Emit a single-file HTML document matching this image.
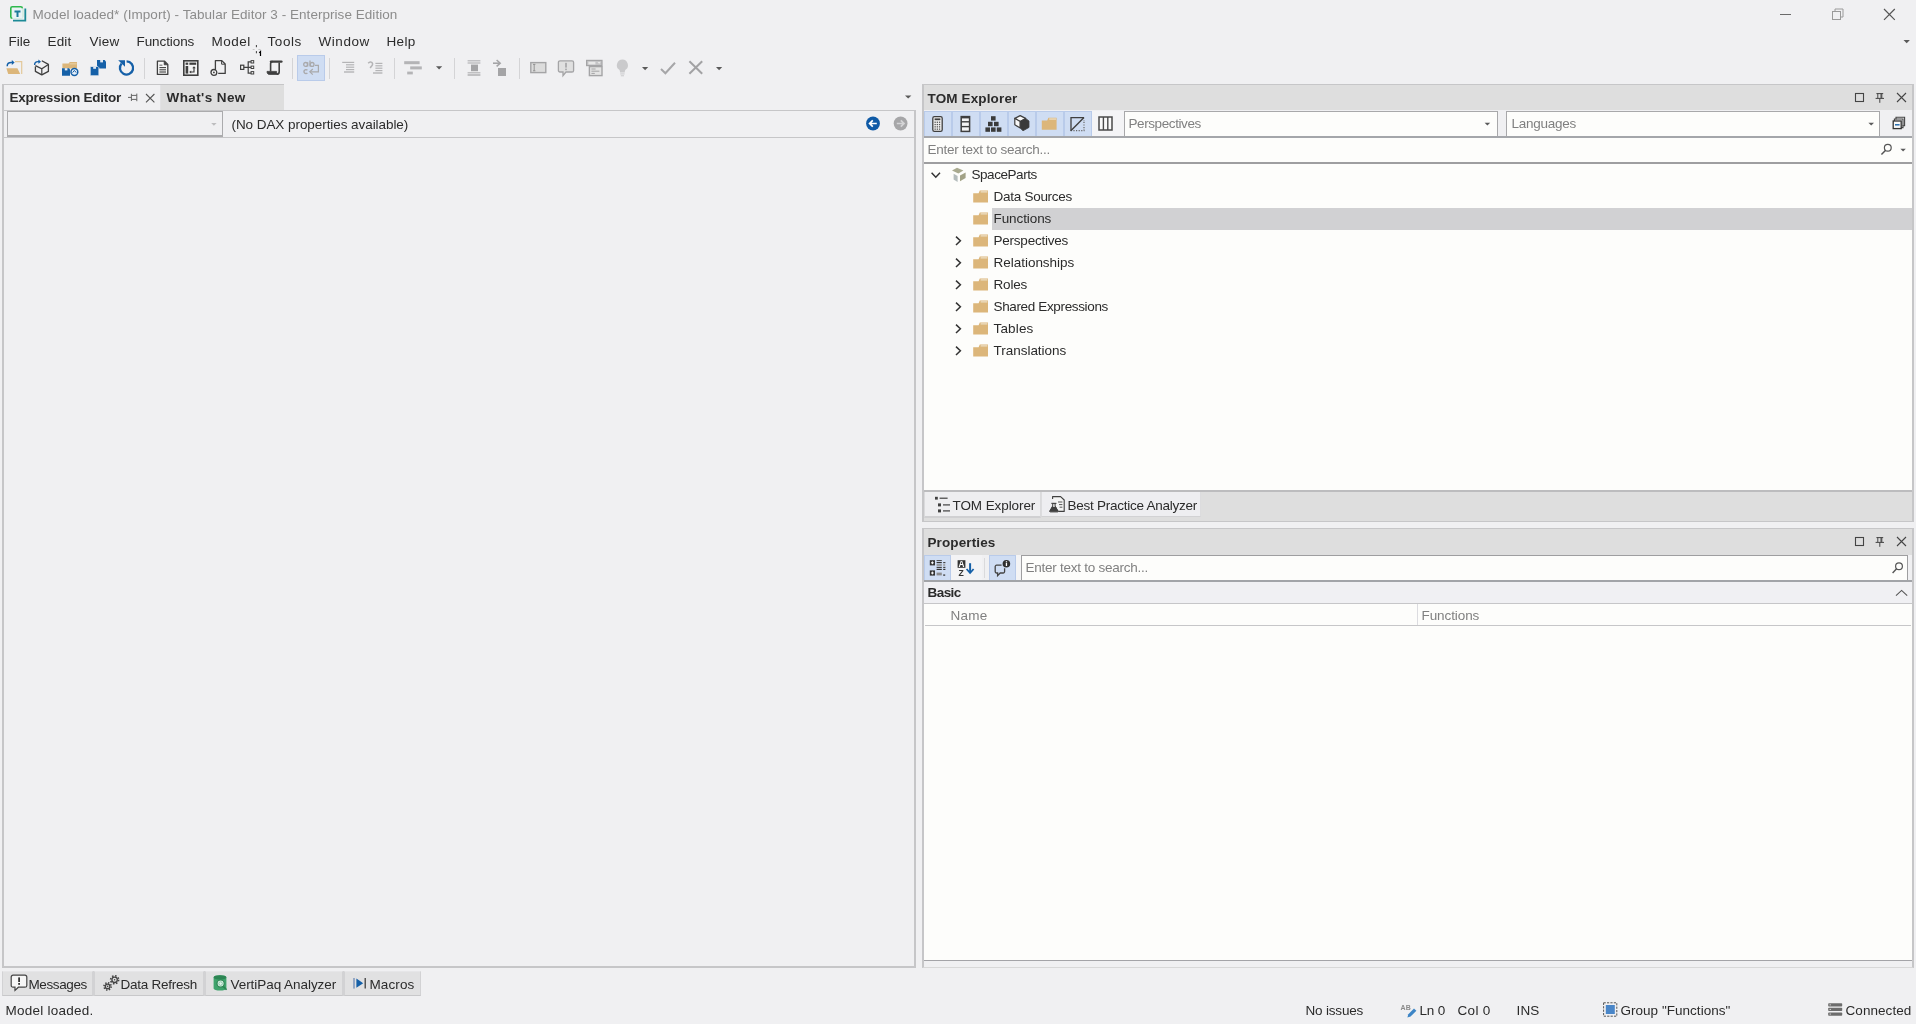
<!DOCTYPE html>
<html><head><meta charset="utf-8"><title>Tabular Editor 3</title>
<style>
html,body{margin:0;padding:0;}
body{width:1916px;height:1024px;overflow:hidden;background:#f0f0f2;position:relative;font-family:"Liberation Sans",sans-serif;font-size:13.5px;color:#2b2b2b;}
.b{position:absolute;box-sizing:border-box;}
.t{position:absolute;white-space:nowrap;line-height:20px;height:20px;}
#tx{position:absolute;left:0;top:0;width:1916px;height:1024px;will-change:transform;}
.t.bd{font-weight:bold;}
svg{position:absolute;overflow:visible;}
</style></head><body>
<div class="b" style="left:2px;top:84px;width:282px;height:26px;border-top:1px solid #c6c6c8;border-left:2px solid #c6c6c8;"></div>
<div class="b" style="left:161px;top:85px;width:123px;height:25px;background:#dedede;"></div>
<div class="b" style="left:2px;top:110px;width:914px;height:1px;background:#c6c6c8;"></div>
<div class="b" style="left:160px;top:85px;width:1px;height:25px;background:#e2e2e4;"></div>
<div class="b" style="left:2px;top:111px;width:2px;height:856px;background:#c6c6c8;"></div>
<div class="b" style="left:914px;top:110px;width:2px;height:857px;background:#c6c6c8;"></div>
<div class="b" style="left:7px;top:111px;width:216px;height:26px;border:1px solid #ababad;border-bottom:2px solid #ababad;"></div>
<div class="b" style="left:4px;top:137px;width:910px;height:1px;background:#c6c6c8;"></div>
<div class="b" style="left:2px;top:966px;width:914px;height:2px;background:#c6c6c8;"></div>
<div class="b" style="left:2px;top:971px;width:419px;height:25px;background:#d2d2d4;"></div>
<div class="b" style="left:2px;top:971px;width:91px;height:25px;background:#e1e1e2;border:1px solid #d2d2d4;border-top-color:#e6e6e8;border-bottom-color:#c8c8ca;"></div>
<div class="b" style="left:94px;top:971px;width:110px;height:25px;background:#e1e1e2;border:1px solid #d2d2d4;border-top-color:#e6e6e8;border-bottom-color:#c8c8ca;"></div>
<div class="b" style="left:205px;top:971px;width:138px;height:25px;background:#e1e1e2;border:1px solid #d2d2d4;border-top-color:#e6e6e8;border-bottom-color:#c8c8ca;"></div>
<div class="b" style="left:344px;top:971px;width:77px;height:25px;background:#e1e1e2;border:1px solid #d2d2d4;border-top-color:#e6e6e8;border-bottom-color:#c8c8ca;"></div>
<div class="b" style="left:922px;top:84px;width:992px;height:438px;background:#dedede;border:1px solid #c6c6c8;border-right:2px solid #c6c6c8;border-left:2px solid #c6c6c8;"></div>
<div class="b" style="left:924px;top:110px;width:988px;height:28px;background:#f0f0f2;"></div>
<div class="b" style="left:924px;top:111px;width:28px;height:25px;background:#cfddf3;border:1px solid #b9cbea;border-bottom:none;"></div>
<div class="b" style="left:952px;top:111px;width:28px;height:25px;background:#cfddf3;border:1px solid #b9cbea;border-bottom:none;"></div>
<div class="b" style="left:980px;top:111px;width:28px;height:25px;background:#cfddf3;border:1px solid #b9cbea;border-bottom:none;"></div>
<div class="b" style="left:1008px;top:111px;width:28px;height:25px;background:#cfddf3;border:1px solid #b9cbea;border-bottom:none;"></div>
<div class="b" style="left:1036px;top:111px;width:28px;height:25px;background:#cfddf3;border:1px solid #b9cbea;border-bottom:none;"></div>
<div class="b" style="left:1064px;top:111px;width:28px;height:25px;background:#cfddf3;border:1px solid #b9cbea;border-bottom:none;"></div>
<div class="b" style="left:1092px;top:111px;width:32px;height:25px;background:#f4f4f6;"></div>
<div class="b" style="left:1124px;top:111px;width:374px;height:25px;background:#fdfdfb;border:1px solid #a8a8aa;border-bottom:none;"></div>
<div class="b" style="left:1506px;top:111px;width:374px;height:25px;background:#fdfdfb;border:1px solid #a8a8aa;border-bottom:none;"></div>
<div class="b" style="left:924px;top:136px;width:988px;height:2px;background:#a4a6aa;"></div>
<div class="b" style="left:924px;top:138px;width:988px;height:26px;background:#fdfdfb;border-bottom:2px solid #9e9ea0;"></div>
<div class="b" style="left:924px;top:164px;width:988px;height:326px;background:#fdfdfb;"></div>
<div class="b" style="left:992px;top:208px;width:920px;height:22px;background:#d1d1d3;"></div>
<div class="b" style="left:924px;top:490px;width:988px;height:2px;background:#bcbcbe;"></div>
<div class="b" style="left:924px;top:492px;width:117px;height:26px;background:#eeeef0;border:1px solid #dadadc;border-top:none;border-bottom:2px solid #d0d0d2;"></div>
<div class="b" style="left:1041px;top:492px;width:160px;height:25px;background:#eeeef1;border:1px solid #dcdcde;border-top:none;border-bottom-color:#d2d2d4;"></div>
<div class="b" style="left:922px;top:528px;width:992px;height:440px;background:#dedede;border:1px solid #c6c6c8;border-right:2px solid #c6c6c8;border-left:2px solid #c6c6c8;border-bottom-color:#d8d8d8;"></div>
<div class="b" style="left:924px;top:555px;width:988px;height:412px;background:#f0f0f2;"></div>
<div class="b" style="left:924px;top:555px;width:27px;height:25px;background:#cfddf3;border:1px solid #b9cbea;border-bottom:none;"></div>
<div class="b" style="left:989px;top:555px;width:27px;height:25px;background:#cfddf3;border:1px solid #b9cbea;border-bottom:none;"></div>
<div class="b" style="left:951px;top:555px;width:31px;height:25px;background:#f3f3f5;"></div>
<div class="b" style="left:983.5px;top:558px;width:1px;height:20px;background:#dadadc;"></div>
<div class="b" style="left:1021px;top:555px;width:887px;height:25px;background:#fdfdfb;border:1px solid #9e9ea0;border-bottom:none;"></div>
<div class="b" style="left:1016px;top:555px;width:5px;height:25px;background:#f4f4f5;"></div>
<div class="b" style="left:924px;top:580px;width:988px;height:2px;background:#a2a4a8;"></div>
<div class="b" style="left:924px;top:582px;width:988px;height:22px;background:#f0f0f3;border-bottom:1px solid #c6c6c8;"></div>
<div class="b" style="left:924px;top:604px;width:988px;height:357px;background:#fdfdfb;border-bottom:1px solid #a4a4a8;"></div>
<div class="b" style="left:925px;top:625px;width:986px;height:1px;background:#c6c6c8;"></div>
<div class="b" style="left:1417px;top:604px;width:1px;height:21px;background:#dcdce0;"></div>
<div class="b" style="left:144px;top:58px;width:1px;height:21px;background:#d4d4d6;"></div>
<div class="b" style="left:292px;top:58px;width:1px;height:21px;background:#d4d4d6;"></div>
<div class="b" style="left:329px;top:58px;width:1px;height:21px;background:#d4d4d6;"></div>
<div class="b" style="left:394px;top:58px;width:1px;height:21px;background:#d4d4d6;"></div>
<div class="b" style="left:454px;top:58px;width:1px;height:21px;background:#d4d4d6;"></div>
<div class="b" style="left:519px;top:58px;width:1px;height:21px;background:#d4d4d6;"></div>
<div class="b" style="left:297px;top:55px;width:28px;height:26px;background:#cfddf3;border:1px solid #b9cbea;"></div>
<div id="tx">
<span class="t" id="t0" style="left:32.50px;top:5px;color:#8c8c8c;letter-spacing:0.043px;">Model loaded* (Import) - Tabular Editor 3 - Enterprise Edition</span>
<span class="t" id="t1" style="left:8.50px;top:32px;letter-spacing:0.011px;">File</span>
<span class="t" id="t2" style="left:47.50px;top:32px;letter-spacing:0.178px;">Edit</span>
<span class="t" id="t3" style="left:89.50px;top:32px;letter-spacing:0.256px;">View</span>
<span class="t" id="t4" style="left:136.50px;top:32px;letter-spacing:-0.091px;">Functions</span>
<span class="t" id="t5" style="left:211.50px;top:32px;letter-spacing:0.505px;">Model</span>
<span class="t" id="t6" style="left:267.50px;top:32px;letter-spacing:0.571px;">Tools</span>
<span class="t" id="t7" style="left:318.50px;top:32px;letter-spacing:0.557px;">Window</span>
<span class="t" id="t8" style="left:386.50px;top:32px;letter-spacing:0.345px;">Help</span>
<span class="t bd" id="t9" style="left:9.50px;top:88px;letter-spacing:-0.233px;">Expression Editor</span>
<span class="t bd" id="t10" style="left:166.50px;top:88px;letter-spacing:0.396px;">What's New</span>
<span class="t" id="t11" style="left:231.50px;top:115px;letter-spacing:-0.064px;">(No DAX properties available)</span>
<span class="t bd" id="t12" style="left:927.50px;top:89px;letter-spacing:0.138px;">TOM Explorer</span>
<span class="t" id="t13" style="left:1128.50px;top:114px;color:#808080;letter-spacing:-0.409px;">Perspectives</span>
<span class="t" id="t14" style="left:1511.50px;top:114px;color:#808080;letter-spacing:-0.254px;">Languages</span>
<span class="t" id="t15" style="left:927.50px;top:140px;color:#808080;letter-spacing:-0.251px;">Enter text to search...</span>
<span class="t" id="t16" style="left:971.50px;top:165px;letter-spacing:-0.444px;">SpaceParts</span>
<span class="t" id="t17" style="left:993.50px;top:187px;letter-spacing:-0.272px;">Data Sources</span>
<span class="t" id="t18" style="left:993.50px;top:209px;letter-spacing:-0.091px;">Functions</span>
<span class="t" id="t19" style="left:993.50px;top:231px;letter-spacing:-0.227px;">Perspectives</span>
<span class="t" id="t20" style="left:993.50px;top:253px;letter-spacing:-0.021px;">Relationships</span>
<span class="t" id="t21" style="left:993.50px;top:275px;letter-spacing:-0.179px;">Roles</span>
<span class="t" id="t22" style="left:993.50px;top:297px;letter-spacing:-0.355px;">Shared Expressions</span>
<span class="t" id="t23" style="left:993.50px;top:319px;letter-spacing:0.154px;">Tables</span>
<span class="t" id="t24" style="left:993.50px;top:341px;letter-spacing:-0.021px;">Translations</span>
<span class="t" id="t25" style="left:952.50px;top:496px;letter-spacing:-0.089px;">TOM Explorer</span>
<span class="t" id="t26" style="left:1067.50px;top:496px;letter-spacing:-0.251px;">Best Practice Analyzer</span>
<span class="t bd" id="t27" style="left:927.50px;top:533px;letter-spacing:0.113px;">Properties</span>
<span class="t" id="t28" style="left:1025.50px;top:558px;color:#808080;letter-spacing:-0.251px;">Enter text to search...</span>
<span class="t bd" id="t29" style="left:927.50px;top:583px;letter-spacing:-0.558px;">Basic</span>
<span class="t" id="t30" style="left:950.50px;top:606px;color:#808080;letter-spacing:0.261px;">Name</span>
<span class="t" id="t31" style="left:1421.50px;top:606px;color:#808080;letter-spacing:-0.091px;">Functions</span>
<span class="t" id="t32" style="left:28.50px;top:975px;letter-spacing:-0.390px;">Messages</span>
<span class="t" id="t33" style="left:120.50px;top:975px;letter-spacing:-0.250px;">Data Refresh</span>
<span class="t" id="t34" style="left:230.50px;top:975px;letter-spacing:-0.049px;">VertiPaq Analyzer</span>
<span class="t" id="t35" style="left:369.50px;top:975px;letter-spacing:0.107px;">Macros</span>
<span class="t" id="t36" style="left:5.50px;top:1001px;letter-spacing:0.249px;">Model loaded.</span>
<span class="t" id="t37" style="left:1305.50px;top:1001px;letter-spacing:-0.185px;">No issues</span>
<span class="t" id="t38" style="left:1419.50px;top:1001px;letter-spacing:-0.160px;">Ln 0</span>
<span class="t" id="t39" style="left:1457.50px;top:1001px;letter-spacing:0.321px;">Col 0</span>
<span class="t" id="t40" style="left:1516.50px;top:1001px;letter-spacing:0.142px;">INS</span>
<span class="t" id="t41" style="left:1620.50px;top:1001px;letter-spacing:0.026px;">Group &quot;Functions&quot;</span>
<span class="t" id="t42" style="left:1845.50px;top:1001px;letter-spacing:0.061px;">Connected</span>
</div>
<svg style="left:0;top:0" width="1916" height="1024" viewBox="0 0 1916 1024">
<rect x="10.8" y="6.8" width="11.5" height="11.5" fill="none" stroke="#2db84d" stroke-width="1.6" rx="1.5"/>
<path d="M13 20.6h12.3v-12" fill="none" stroke="#1c8a96" stroke-width="1.8" />
<rect x="12.3" y="8.3" width="10.6" height="10.6" fill="#e9f3f6" />
<path d="M14.5 10.5h6v2h-2v4.5h-2v-4.5h-2z" fill="#1c7a9a" stroke="none" stroke-width="1" />
<line x1="1780" y1="14.5" x2="1791" y2="14.5" stroke="#6a6a6a" stroke-width="1" />
<rect x="1832.5" y="11.5" width="8" height="8" fill="none" stroke="#9a9a9a" stroke-width="1" rx="0"/>
<path d="M1835 11.5v-2.5h8v8h-2.5" fill="none" stroke="#9a9a9a" stroke-width="1" />
<path d="M1884 9l10.8 10.8M1894.8 9l-10.8 10.8" fill="none" stroke="#555" stroke-width="1.2" />
<path d="M1903.5 40h6.4l-3.2 3.2z" fill="#5a5a5a" stroke="none" stroke-width="1" />
<g transform="translate(6 60)">
<path d="M9 1.7h6.7v12.3" fill="none" stroke="#e3c89a" stroke-width="1.2" />
<path d="M0.4 8.3h11l2.8 5.7h-12z" fill="#dcb67a" stroke="none" stroke-width="1" />
<path d="M1.2 6.2c0-2.6 1.6-3.6 4-3.6h1.6" fill="none" stroke="#1560a8" stroke-width="1.5" />
<path d="M5.8 0l2.8 2.5l-2.8 2.5z" fill="#1560a8" stroke="none" stroke-width="1" />
</g>
<g transform="translate(34 60)">
<path d="M7.8 0.8l6.6 3.6v7l-6.6 3.5l-6.4-3.5v-5" fill="none" stroke="#3f3f3f" stroke-width="1.3" stroke-linejoin="round"/>
<path d="M1.4 5.6l6.4 3.2l6.6-4.4M7.8 8.8v6" fill="none" stroke="#3f3f3f" stroke-width="1.2" />
<path d="M0.6 5c0-2.4 1.4-3.4 3.4-3.4h1.2" fill="none" stroke="#1560a8" stroke-width="1.4" />
<path d="M4.4 -0.4l2.6 2.1l-2.6 2.1z" fill="#1560a8" stroke="none" stroke-width="1" />
</g>
<g transform="translate(62 60)">
<path d="M0.4 3.6h6.2l1.2-1.6h7.2v6.4h-14.6z" fill="#dcb67a" stroke="none" stroke-width="1" />
<rect x="7.6" y="3.4" width="7" height="0.9" fill="#ecd6ae" />
<path d="M0 8.2h7l1 1v6.6h-8z" fill="#1560a8" stroke="none" stroke-width="1" />
<rect x="2.8" y="8.2" width="2.6" height="2.2" fill="#e8eef6" />
<circle cx="12.4" cy="12" r="3.4" fill="#e6eef8" stroke="#1560a8" stroke-width="1.5"/>
<path d="M10.6 12.6l1.8-2.2l1.8 2.2" fill="none" stroke="#1560a8" stroke-width="1" />
</g>
<g transform="translate(90 60)">
<path d="M7 0h7.6l1.4 1.4v7.2h-9z" fill="#1560a8" stroke="none" stroke-width="1" />
<rect x="10.2" y="0" width="2.8" height="2.4" fill="#dfe8f3" />
<path d="M0.2 6.4h7.4l1.3 1.3v8.1h-8.7z" fill="#1560a8" stroke="#f0f0f2" stroke-width="0.8" />
<rect x="3.2" y="6.6" width="2.8" height="2.2" fill="#dfe8f3" />
</g>
<g transform="translate(118 60)">
<path d="M3.6 3.6A6.6 6.6 0 1 0 8.6 1.4" fill="none" stroke="#1560a8" stroke-width="2.3" />
<path d="M0.2 0.2h6.8v6.6z" fill="#1560a8" stroke="none" stroke-width="1" />
</g>
<g transform="translate(154 60)">
<path d="M3.4 1.2h7.2l3.2 3.2v10h-10.4z" fill="#f7f7f7" stroke="#3f3f3f" stroke-width="1.3" stroke-linejoin="round"/>
<path d="M10.2 1.2v3.6h3.6" fill="#3f3f3f" stroke="#3f3f3f" stroke-width="0.8" />
<line x1="5.4" y1="5.2" x2="8.4" y2="5.2" stroke="#777" stroke-width="1.2" />
<line x1="5.4" y1="7.6" x2="12" y2="7.6" stroke="#3f3f3f" stroke-width="1.1" />
<line x1="5.4" y1="9.8" x2="12" y2="9.8" stroke="#3f3f3f" stroke-width="1.1" />
<line x1="5.4" y1="12" x2="12" y2="12" stroke="#3f3f3f" stroke-width="1.1" />
</g>
<g transform="translate(182 60)">
<rect x="1.8" y="0.8" width="14" height="14.4" fill="#f4f4f4" stroke="#3f3f3f" stroke-width="1.6" rx="0"/>
<rect x="3.6" y="2.6" width="2.6" height="2.2" fill="#3f3f3f" />
<rect x="7.4" y="2.6" width="6.8" height="2.2" fill="#3f3f3f" />
<rect x="3.6" y="6" width="2.6" height="7.6" fill="#3f3f3f" />
<path d="M8.4 12h3.6v-4.6" fill="none" stroke="#3f3f3f" stroke-width="1.2" />
<path d="M10.2 8.2l1.8-2l1.8 2z" fill="#3f3f3f" stroke="none" stroke-width="1" />
<path d="M9.2 10.4l-2 1.6l2 1.6z" fill="#3f3f3f" stroke="none" stroke-width="1" />
</g>
<g transform="translate(210 60)">
<path d="M5.4 10.6v-10h6.4l3.4 3.4v9.4h-7" fill="none" stroke="#3f3f3f" stroke-width="1.3" stroke-linejoin="round"/>
<path d="M11.6 0.8v3.4h3.4" fill="none" stroke="#3f3f3f" stroke-width="1" />
<circle cx="3.9" cy="12.4" r="2.9" fill="#f4f4f4" stroke="#3f3f3f" stroke-width="1.3"/>
<circle cx="3.9" cy="12.4" r="0.9" fill="#3f3f3f" stroke="none" stroke-width="1"/>
</g>
<g transform="translate(238 60)">
<rect x="2.6" y="5.2" width="3.2" height="4.2" fill="#f8f8f8" stroke="#3f3f3f" stroke-width="1.2" rx="0"/>
<path d="M5.8 7.3h4.4M13.2 1.8h-3v11.4h3M10.2 7.3h3" fill="none" stroke="#3f3f3f" stroke-width="1.2" />
<rect x="13.1" y="0.6" width="2.6" height="2.4" fill="#f8f8f8" stroke="#3f3f3f" stroke-width="1" rx="0"/>
<rect x="13.1" y="6.1" width="2.6" height="2.4" fill="#f8f8f8" stroke="#3f3f3f" stroke-width="1" rx="0"/>
<rect x="13.1" y="11.6" width="2.6" height="2.4" fill="#f8f8f8" stroke="#3f3f3f" stroke-width="1" rx="0"/>
</g>
<g transform="translate(266 60)">
<path d="M5 1.6h10.4" fill="none" stroke="#3f3f3f" stroke-width="2.4" stroke-linecap="round"/>
<path d="M4.6 11.4v-7.6c0-1.4 0.8-2.2 2-2.2M13.2 2.6v9.2c0 1.6-1 2.4-2.4 2.4" fill="none" stroke="#3f3f3f" stroke-width="1.6" />
<path d="M1 11.4h9.6c0 1.6 0.6 2.8 1.6 3h-9c-1.4 0-2.2-1.2-2.2-3z" fill="#3f3f3f" stroke="#3f3f3f" stroke-width="0.8" />
</g>
<g transform="translate(303 60)">
<circle cx="2.6" cy="4.4" r="1.9" fill="none" stroke="#a9a9ab" stroke-width="1.3"/>
<line x1="4.7" y1="2.2" x2="4.7" y2="6.6" stroke="#a9a9ab" stroke-width="1.3" />
<line x1="7" y1="0.6" x2="7" y2="6.6" stroke="#a9a9ab" stroke-width="1.3" />
<circle cx="9.1" cy="4.4" r="1.9" fill="none" stroke="#a9a9ab" stroke-width="1.3"/>
<path d="M4.4 10.2a2 2 0 1 0 0 2.8" fill="none" stroke="#a9a9ab" stroke-width="1.4" />
<path d="M12 5.4h3.4v6.4h-8.2" fill="none" stroke="#a9a9ab" stroke-width="1.2" />
<path d="M9.8 9l-3 2.8l3 2.8" fill="none" stroke="#a9a9ab" stroke-width="1.2" />
</g>
<g transform="translate(340 60)">
<line x1="2.2" y1="2.4" x2="14.2" y2="2.4" stroke="#b4b4b6" stroke-width="1.2" />
<line x1="6" y1="4.8" x2="14.2" y2="4.8" stroke="#b4b4b6" stroke-width="1.2" />
<line x1="6" y1="7.2" x2="14.2" y2="7.2" stroke="#b4b4b6" stroke-width="1.2" />
<line x1="6" y1="9.6" x2="14.2" y2="9.6" stroke="#b4b4b6" stroke-width="1.2" />
<line x1="4" y1="12" x2="14.2" y2="12" stroke="#b4b4b6" stroke-width="1.4" />
</g>
<g transform="translate(367 60)">
<path d="M1.2 3.2c1.4-1.8 4-1.6 4.4 0.6c0.2 1.6-1.4 2.6-2.4 4.2" fill="none" stroke="#b4b4b6" stroke-width="1.6" />
<line x1="8.4" y1="3.4" x2="15.4" y2="3.4" stroke="#b4b4b6" stroke-width="1.2" />
<line x1="8.4" y1="5.8" x2="15.4" y2="5.8" stroke="#b4b4b6" stroke-width="1.2" />
<line x1="8.4" y1="8.2" x2="15.4" y2="8.2" stroke="#b4b4b6" stroke-width="1.2" />
<line x1="8.4" y1="10.6" x2="15.4" y2="10.6" stroke="#b4b4b6" stroke-width="1.2" />
<line x1="6" y1="13" x2="15.4" y2="13" stroke="#b4b4b6" stroke-width="1.4" />
</g>
<rect x="404.2" y="61.2" width="15.4" height="3" fill="#b4b4b6" />
<rect x="410.2" y="66.4" width="11.6" height="3" fill="#b4b4b6" />
<rect x="407.2" y="71.6" width="5.6" height="2.8" fill="#b4b4b6" />
<path d="M436 66.2h6.2l-3.1 3.2z" fill="#5a5a5a" stroke="none" stroke-width="1" />
<g transform="translate(465 60)">
<line x1="2.6" y1="0.8" x2="15.4" y2="0.8" stroke="#b4b4b6" stroke-width="1.2" />
<line x1="2.6" y1="3" x2="15.4" y2="3" stroke="#b4b4b6" stroke-width="1.2" />
<rect x="6" y="4.6" width="7" height="6.6" fill="#a4a4a6" />
<line x1="2.6" y1="12.8" x2="15.4" y2="12.8" stroke="#b4b4b6" stroke-width="1.2" />
<line x1="2.6" y1="15" x2="15.4" y2="15" stroke="#b4b4b6" stroke-width="1.6" />
</g>
<g transform="translate(492 60)">
<path d="M1 3.2h6" fill="none" stroke="#a4a4a6" stroke-width="1.6" />
<path d="M4.6 0l3.6 3.2l-3.6 3.2" fill="none" stroke="#a4a4a6" stroke-width="1.5" />
<rect x="6" y="8" width="8" height="8" fill="#a4a4a6" />
</g>
<rect x="530.8" y="62.6" width="15" height="10" fill="#dcdcdc" stroke="#a4a4a6" stroke-width="1.4" rx="0"/>
<path d="M533 64.4h2.4M533 70.8h2.4M534.2 64.4v6.4" fill="none" stroke="#8c8c8c" stroke-width="0.9" />
<g transform="translate(558 60)">
<path d="M2 0.8h12a1.6 1.6 0 0 1 1.6 1.6v8a1.6 1.6 0 0 1-1.6 1.6h-6l-3 3.6v-3.6h-3a1.6 1.6 0 0 1-1.6-1.6v-8a1.6 1.6 0 0 1 1.6-1.6z" fill="#e0e0e0" stroke="#a4a4a6" stroke-width="1.3" />
<rect x="7.2" y="2.8" width="1.6" height="4.8" fill="#a4a4a6" />
<rect x="7.2" y="8.6" width="1.6" height="1.6" fill="#a4a4a6" />
</g>
<g transform="translate(586 60)">
<rect x="0.6" y="0.4" width="15.4" height="5.2" fill="#c4c4c6" stroke="#a4a4a6" stroke-width="1.2" rx="0"/>
<rect x="2.4" y="1.8" width="7" height="2.6" fill="#e8e8e8" />
<path d="M11.6 2l3 0l-1.5 2z" fill="#e8e8e8" stroke="none" stroke-width="1" />
<rect x="3.4" y="6.6" width="12.6" height="9" fill="#e4e4e4" stroke="#a4a4a6" stroke-width="1.4" rx="0"/>
<line x1="5.4" y1="9" x2="9.6" y2="9" stroke="#a4a4a6" stroke-width="1" />
<line x1="5.4" y1="11.2" x2="13.4" y2="11.2" stroke="#a4a4a6" stroke-width="1" />
<line x1="5.4" y1="13.4" x2="8.8" y2="13.4" stroke="#a4a4a6" stroke-width="1" />
</g>
<g transform="translate(614 60)">
<path d="M8.4 -0.4a5.6 5.6 0 0 1 3.4 10c-0.8 0.8-1 1.6-1 3h-4.8c0-1.4-0.2-2.2-1-3a5.6 5.6 0 0 1 3.4-10z" fill="#cacacc" stroke="none" stroke-width="1" />
<rect x="6.2" y="13.2" width="4.4" height="1.4" fill="#d4d4d6" />
<rect x="6.8" y="15" width="3.2" height="1.4" fill="#d4d4d6" />
</g>
<path d="M642 67h6.2l-3.1 3.2z" fill="#5a5a5a" stroke="none" stroke-width="1" />
<path d="M661 69l4.4 4.2l9.6-10.4" fill="none" stroke="#a6a6a8" stroke-width="2" />
<path d="M689.4 61.2l12.8 12.6M702.2 61.2l-12.8 12.6" fill="none" stroke="#a2a2a4" stroke-width="2" />
<path d="M716 67h6.2l-3.1 3.2z" fill="#5a5a5a" stroke="none" stroke-width="1" />
<path d="M128 97.4h3.4M131.4 93.8v7.2M131.4 95.4h5.4M131.4 99.4h5.4M136.8 93.6v7.6" fill="none" stroke="#666" stroke-width="1" />
<path d="M146 94l8.4 8.4M154.4 94l-8.4 8.4" fill="none" stroke="#555" stroke-width="1.1" />
<path d="M905 95.4h6.4l-3.2 3.2z" fill="#5a5a5a" stroke="none" stroke-width="1" />
<path d="M211.2 123h5.4l-2.7 2.7z" fill="#bdbdbf" stroke="none" stroke-width="1" />
<circle cx="873" cy="123.5" r="6.9" fill="#0f5aa6" stroke="none" stroke-width="1"/>
<path d="M876.8 123.5h-6.6M872.8 120.4l-3.2 3.1l3.2 3.1" fill="none" stroke="#fff" stroke-width="1.7" />
<circle cx="900.6" cy="123.5" r="6.9" fill="#a6a6a8" stroke="none" stroke-width="1"/>
<path d="M896.8 123.5h6.6M900.8 120.4l3.2 3.1l-3.2 3.1" fill="none" stroke="#d4d4d6" stroke-width="1.7" />
<rect x="1855.5" y="93.5" width="8" height="8" fill="none" stroke="#444" stroke-width="1.1" rx="0"/>
<path d="M1876.4 93.6h6.8M1877.8 93.6v4.6M1881.8 93.6v4.6M1881 93.6v4.6M1875.6 98.4h8.4M1879.8 98.4v4.4" fill="none" stroke="#444" stroke-width="1" />
<path d="M1897 93l9 9M1906 93l-9 9" fill="none" stroke="#444" stroke-width="1.1" />
<rect x="1855.5" y="537.5" width="8" height="8" fill="none" stroke="#444" stroke-width="1.1" rx="0"/>
<path d="M1876.4 537.6h6.8M1877.8 537.6v4.6M1881.8 537.6v4.6M1881 537.6v4.6M1875.6 542.4h8.4M1879.8 542.4v4.4" fill="none" stroke="#444" stroke-width="1" />
<path d="M1897 537l9 9M1906 537l-9 9" fill="none" stroke="#444" stroke-width="1.1" />
<rect x="932.8" y="116.6" width="9.4" height="14.8" fill="#f2f2f2" stroke="#3f3f3f" stroke-width="1.3" rx="1.6"/>
<rect x="934.6" y="118.4" width="5.8" height="1.8" fill="#3f3f3f" />
<rect x="934.5" y="121.6" width="1.3" height="1.3" fill="#555" />
<rect x="936.7" y="121.6" width="1.3" height="1.3" fill="#555" />
<rect x="938.9" y="121.6" width="1.3" height="1.3" fill="#555" />
<rect x="934.5" y="123.89999999999999" width="1.3" height="1.3" fill="#555" />
<rect x="936.7" y="123.89999999999999" width="1.3" height="1.3" fill="#555" />
<rect x="938.9" y="123.89999999999999" width="1.3" height="1.3" fill="#555" />
<rect x="934.5" y="126.19999999999999" width="1.3" height="1.3" fill="#555" />
<rect x="936.7" y="126.19999999999999" width="1.3" height="1.3" fill="#555" />
<rect x="938.9" y="126.19999999999999" width="1.3" height="1.3" fill="#555" />
<rect x="934.5" y="128.5" width="1.3" height="1.3" fill="#555" />
<rect x="936.7" y="128.5" width="1.3" height="1.3" fill="#555" />
<rect x="938.9" y="128.5" width="1.3" height="1.3" fill="#555" />
<rect x="961.2" y="116.6" width="8.4" height="14.8" fill="#f4f4f4" stroke="#3f3f3f" stroke-width="1.5" rx="0"/>
<rect x="961" y="116.2" width="8.8" height="2.2" fill="#3f3f3f" />
<line x1="961" y1="121.8" x2="969.8" y2="121.8" stroke="#3f3f3f" stroke-width="1.4" />
<line x1="961" y1="126.6" x2="969.8" y2="126.6" stroke="#3f3f3f" stroke-width="1.4" />
<rect x="991" y="116.2" width="4.6" height="4.4" fill="#3a3a3a" />
<rect x="988" y="121.8" width="4.6" height="4.4" fill="#3a3a3a" />
<rect x="994" y="121.8" width="4.6" height="4.4" fill="#3a3a3a" />
<rect x="985.4" y="127.4" width="4.6" height="4.4" fill="#3a3a3a" />
<rect x="991" y="127.4" width="4.6" height="4.4" fill="#3a3a3a" />
<rect x="996.8" y="127.4" width="4.6" height="4.4" fill="#3a3a3a" />
<g transform="translate(1014 115)">
<path d="M6.2 0.6l5.4 2.8l-5.4 3l-5.4-3z" fill="#f8f8f8" stroke="#3f3f3f" stroke-width="1.2" stroke-linejoin="round"/>
<path d="M0.8 3.4v6.4l5.4 3.2v-6.6z" fill="#f8f8f8" stroke="#3f3f3f" stroke-width="1.2" stroke-linejoin="round"/>
<path d="M6.2 6.4l5.4-3l3.4 2.6v6.4l-6 3.4l-2.8-2.8z" fill="#3a3a3a" stroke="#3f3f3f" stroke-width="0.8" stroke-linejoin="round"/>
</g>
<path d="M1041.8 120.39999999999999h5.4l1.2-2.6h8.2v12h-14.8z" fill="#dcb67a" stroke="none" stroke-width="1" />
<rect x="1049.2" y="118.3" width="6.8" height="1.5" fill="#ead9ba" />
<path d="M1071 130.6v-13h13" fill="none" stroke="#3f3f3f" stroke-width="1.3" />
<line x1="1070.6" y1="131" x2="1084" y2="117.6" stroke="#3f3f3f" stroke-width="1.4" />
<path d="M1073.4 130.6h10.6v-10.6" fill="none" stroke="#666" stroke-width="1.2" stroke-dasharray="1.2 1.4"/>
<rect x="1099" y="117" width="13" height="13" fill="#fafafa" stroke="#4a4a4a" stroke-width="1.5" rx="0"/>
<line x1="1103.4" y1="117" x2="1103.4" y2="130" stroke="#4a4a4a" stroke-width="1.4" />
<line x1="1107.8" y1="117" x2="1107.8" y2="130" stroke="#4a4a4a" stroke-width="1.4" />
<path d="M1484.6 122.8h5.6l-2.8 2.8z" fill="#5a5a5a" stroke="none" stroke-width="1" />
<path d="M1868.4 122.8h5.6l-2.8 2.8z" fill="#5a5a5a" stroke="none" stroke-width="1" />
<path d="M1896 119.4v-2.2h8.6v8.6h-2.2" fill="none" stroke="#444" stroke-width="1.1" />
<path d="M1894.4 121v-2h8.6v8.6h-2" fill="none" stroke="#444" stroke-width="1.1" />
<rect x="1893.2" y="121" width="8" height="7.6" fill="#f8f8f8" stroke="#333" stroke-width="1.3" rx="0"/>
<line x1="1895" y1="124.8" x2="1899.6" y2="124.8" stroke="#1560a8" stroke-width="1.4" />
<circle cx="1887.8000000000002" cy="147.79999999999998" r="3.4" fill="none" stroke="#555" stroke-width="1.2"/>
<line x1="1885.4" y1="150.4" x2="1881.4" y2="154.6" stroke="#555" stroke-width="1.4" />
<path d="M1900.4 148.8h5.4l-2.7 2.7z" fill="#5a5a5a" stroke="none" stroke-width="1" />
<circle cx="1899.0" cy="566.2" r="3.4" fill="none" stroke="#555" stroke-width="1.2"/>
<line x1="1896.6" y1="568.8" x2="1892.6" y2="573" stroke="#555" stroke-width="1.4" />
<path d="M931.6 172.8l4.2 4.4l4.2-4.4" fill="none" stroke="#333" stroke-width="1.5" />
<g transform="translate(951 167)">
<path d="M1 3.4l5-2.6l6.4 2.8l-5 2.8z" fill="#a9aa8f" stroke="none" stroke-width="1" />
<path d="M2.6 6.8l4 2.2v6l-4-2.4z" fill="#b4bcbc" stroke="none" stroke-width="1" />
<path d="M9 8.4l5.6-3v5.6l-5.6 3.2z" fill="#a2a286" stroke="none" stroke-width="1" />
</g>
<path d="M973.2 193.20000000000002h5.4l1.2-2.6h8.2v12h-14.8z" fill="#dcb67a" stroke="none" stroke-width="1" />
<rect x="980.6" y="191.1" width="6.8" height="1.5" fill="#ead9ba" />
<path d="M973.2 215.20000000000002h5.4l1.2-2.6h8.2v12h-14.8z" fill="#dcb67a" stroke="none" stroke-width="1" />
<rect x="980.6" y="213.1" width="6.8" height="1.5" fill="#ead9ba" />
<path d="M973.2 237.20000000000002h5.4l1.2-2.6h8.2v12h-14.8z" fill="#dcb67a" stroke="none" stroke-width="1" />
<rect x="980.6" y="235.1" width="6.8" height="1.5" fill="#ead9ba" />
<path d="M973.2 259.2h5.4l1.2-2.6h8.2v12h-14.8z" fill="#dcb67a" stroke="none" stroke-width="1" />
<rect x="980.6" y="257.09999999999997" width="6.8" height="1.5" fill="#ead9ba" />
<path d="M973.2 281.2h5.4l1.2-2.6h8.2v12h-14.8z" fill="#dcb67a" stroke="none" stroke-width="1" />
<rect x="980.6" y="279.09999999999997" width="6.8" height="1.5" fill="#ead9ba" />
<path d="M973.2 303.2h5.4l1.2-2.6h8.2v12h-14.8z" fill="#dcb67a" stroke="none" stroke-width="1" />
<rect x="980.6" y="301.09999999999997" width="6.8" height="1.5" fill="#ead9ba" />
<path d="M973.2 325.2h5.4l1.2-2.6h8.2v12h-14.8z" fill="#dcb67a" stroke="none" stroke-width="1" />
<rect x="980.6" y="323.09999999999997" width="6.8" height="1.5" fill="#ead9ba" />
<path d="M973.2 347.2h5.4l1.2-2.6h8.2v12h-14.8z" fill="#dcb67a" stroke="none" stroke-width="1" />
<rect x="980.6" y="345.09999999999997" width="6.8" height="1.5" fill="#ead9ba" />
<path d="M956 236.60000000000002l4.4 4.2l-4.4 4.2" fill="none" stroke="#333" stroke-width="1.5" />
<path d="M956 258.6l4.4 4.2l-4.4 4.2" fill="none" stroke="#333" stroke-width="1.5" />
<path d="M956 280.6l4.4 4.2l-4.4 4.2" fill="none" stroke="#333" stroke-width="1.5" />
<path d="M956 302.6l4.4 4.2l-4.4 4.2" fill="none" stroke="#333" stroke-width="1.5" />
<path d="M956 324.6l4.4 4.2l-4.4 4.2" fill="none" stroke="#333" stroke-width="1.5" />
<path d="M956 346.6l4.4 4.2l-4.4 4.2" fill="none" stroke="#333" stroke-width="1.5" />
<rect x="935" y="496.8" width="2.8" height="2.8" fill="#3f3f3f" />
<line x1="939.6" y1="498.2" x2="947.6" y2="498.2" stroke="#3f3f3f" stroke-width="1.2" />
<rect x="938" y="503.4" width="3" height="3" fill="#3f3f3f" />
<line x1="943" y1="504.9" x2="950" y2="504.9" stroke="#3f3f3f" stroke-width="1.2" />
<rect x="938" y="509.4" width="3" height="3" fill="#3f3f3f" />
<line x1="943" y1="510.9" x2="950" y2="510.9" stroke="#3f3f3f" stroke-width="1.2" />
<g transform="translate(1049 496)">
<path d="M3.6 3v-2.4h8l3.6 3.4v11.4h-6" fill="#f4f4f4" stroke="#3f3f3f" stroke-width="1.1" stroke-linejoin="round"/>
<line x1="9" y1="6" x2="13.4" y2="6" stroke="#555" stroke-width="1" />
<line x1="10" y1="8.6" x2="13.4" y2="8.6" stroke="#555" stroke-width="1" />
<line x1="10.6" y1="11.2" x2="13.4" y2="11.2" stroke="#555" stroke-width="1" />
<path d="M2.4 7.4h5" fill="none" stroke="#3f3f3f" stroke-width="1.2" />
<path d="M3.7 7.6v2.4l-2.9 5a0.6 0.6 0 0 0 0.6 0.9h7a0.6 0.6 0 0 0 0.6-0.9l-2.9-5v-2.4z" fill="#f4f4f4" stroke="#3f3f3f" stroke-width="1" />
<path d="M2.9 10.8h4l2.5 4.4a0.4 0.4 0 0 1-0.4 0.6h-8.2a0.4 0.4 0 0 1-0.4-0.6z" fill="#3f3f3f" stroke="none" stroke-width="1" />
</g>
<rect x="929.8" y="560.2" width="5.2" height="5.2" fill="#333" />
<path d="M931 562.8000000000001h2.8M932.4 561.4000000000001v2.8" fill="none" stroke="#fff" stroke-width="1" />
<rect x="929.8" y="570.4" width="5.2" height="5.2" fill="#333" />
<path d="M931 573.0h2.8M932.4 571.6v2.8" fill="none" stroke="#fff" stroke-width="1" />
<line x1="936.6" y1="560.6" x2="941.8" y2="560.6" stroke="#444" stroke-width="1" />
<line x1="936.6" y1="562.6" x2="941.8" y2="562.6" stroke="#333" stroke-width="1.2" />
<rect x="936.6" y="564.2" width="5.2" height="1.6" fill="#8c8c8c" />
<line x1="943.2" y1="562.6" x2="945.4" y2="562.6" stroke="#444" stroke-width="1.2" />
<rect x="943.2" y="564.2" width="2" height="1.6" fill="#9a9a9a" />
<line x1="936.6" y1="567.4" x2="941.8" y2="567.4" stroke="#444" stroke-width="1.2" />
<line x1="943.2" y1="567.4" x2="945.4" y2="567.4" stroke="#444" stroke-width="1.2" />
<line x1="936.6" y1="569.4" x2="941.8" y2="569.4" stroke="#333" stroke-width="1.2" />
<line x1="943.2" y1="569.4" x2="945.4" y2="569.4" stroke="#333" stroke-width="1.2" />
<rect x="936.6" y="572.6" width="5.2" height="2.8" fill="#8c8c8c" />
<rect x="943.2" y="574.4" width="2" height="1.4" fill="#444" />
<rect x="957.6" y="560.2" width="7.8" height="7.6" fill="#333" />
<text x="958.6" y="567" font-family="Liberation Sans" font-size="8.2" font-weight="bold" fill="#fff">A</text>
<text x="958.4" y="576.2" font-family="Liberation Sans" font-size="8.6" font-weight="bold" fill="#333">Z</text>
<line x1="970.1" y1="563.2" x2="970.1" y2="572" stroke="#1560a8" stroke-width="2" />
<path d="M966.6 569l3.5 4l3.5-4" fill="none" stroke="#1560a8" stroke-width="1.8" />
<path d="M1001.6 565.2h-5a1.4 1.4 0 0 0-1.4 1.4v5a1.4 1.4 0 0 0 1.4 1.4h1v2.6l2.6-2.6h3a1.4 1.4 0 0 0 1.4-1.4v-3.4" fill="none" stroke="#444" stroke-width="1.3" />
<circle cx="1006.4" cy="563.7" r="3.8" fill="#2e2e2e" stroke="none" stroke-width="1"/>
<rect x="1005.8" y="563" width="1.3" height="3" fill="#fff" />
<rect x="1005.8" y="561.2" width="1.3" height="1.2" fill="#fff" />
<path d="M1896 595.6l5.6-5.2l5.6 5.2" fill="none" stroke="#555" stroke-width="1.1" />
<g transform="translate(10 974)">
<path d="M3 1.2h12a1.8 1.8 0 0 1 1.8 1.8v8.4a1.8 1.8 0 0 1-1.8 1.8h-6.6l-3.4 3.2v-3.2h-2a1.8 1.8 0 0 1-1.8-1.8v-8.4a1.8 1.8 0 0 1 1.8-1.8z" fill="#f6f6f6" stroke="#444" stroke-width="1.2" />
<rect x="8.2" y="3.4" width="1.8" height="4.6" fill="#333" />
<rect x="8.2" y="9" width="1.8" height="1.8" fill="#333" />
</g>
<circle cx="114.6" cy="979.8" r="2.7" fill="none" stroke="#444" stroke-width="1.3"/>
<circle cx="114.6" cy="979.8" r="4.0" fill="none" stroke="#444" stroke-width="1.6" stroke-dasharray="1.56 1.58"/>
<circle cx="114.6" cy="979.8" r="0.8" fill="#444" stroke="none" stroke-width="1"/>
<circle cx="107.6" cy="986.4" r="2.3" fill="none" stroke="#444" stroke-width="1.3"/>
<circle cx="107.6" cy="986.4" r="3.5999999999999996" fill="none" stroke="#444" stroke-width="1.6" stroke-dasharray="1.40 1.42"/>
<circle cx="107.6" cy="986.4" r="0.8" fill="#444" stroke="none" stroke-width="1"/>
<g transform="translate(213 975)">
<path d="M0.6 2.4a6.4 2.2 0 0 1 12.8 0v11a6.4 2.2 0 0 1-12.8 0z" fill="#3fa36c" stroke="none" stroke-width="1" />
<ellipse cx="7" cy="2.4" rx="6.4" ry="2.2" fill="#2c8553"/>
<circle cx="7.6" cy="8.6" r="3.6" fill="#e4f2ea" stroke="#2c8553" stroke-width="1.2"/>
<line x1="10.2" y1="11.4" x2="13.6" y2="14.8" stroke="#2c8553" stroke-width="1.6" />
<circle cx="7.6" cy="8.6" r="1.8" fill="none" stroke="#7cc4a0" stroke-width="0.9"/>
</g>
<line x1="354" y1="978" x2="354" y2="988.6" stroke="#4a6fa5" stroke-width="1" />
<line x1="365.2" y1="978" x2="365.2" y2="988.6" stroke="#333" stroke-width="1.2" />
<path d="M356.4 978.6l6.8 4.6l-6.8 4.6z" fill="#1560a8" stroke="none" stroke-width="1" />
<text x="1400.6" y="1009.6" font-family="Liberation Sans" font-size="7" font-weight="bold" fill="#8a8a8a">AB</text>
<path d="M1414 1008.4l2.4 2.4l-5.8 5.8l-3.2 0.9l0.9-3.2z" fill="#3d85c6" stroke="none" stroke-width="1" />
<rect x="1603.6" y="1002.8" width="13.2" height="13.4" fill="none" stroke="#555" stroke-width="1" rx="0" stroke-dasharray="2.2 1.2"/>
<rect x="1605.8" y="1005" width="9" height="9" fill="#4a86c8" />
<rect x="1828.2" y="1003.2" width="14" height="3.3" fill="#6c6c6c" rx="0.8"/>
<rect x="1829.6" y="1004.3000000000001" width="1.2" height="1.1" fill="#ddd" />
<rect x="1828.2" y="1007.8" width="14" height="3.3" fill="#6c6c6c" rx="0.8"/>
<rect x="1829.6" y="1008.9" width="1.2" height="1.1" fill="#ddd" />
<rect x="1828.2" y="1012.4" width="14" height="3.3" fill="#6c6c6c" rx="0.8"/>
<rect x="1829.6" y="1013.5" width="1.2" height="1.1" fill="#ddd" />
<path d="M256.4 45v2.2M256.4 51.1v2.2" fill="none" stroke="#3a3a3a" stroke-width="1" />
<path d="M252.7 49.5h1.9M258.4 49.5h2.2" fill="none" stroke="#c4c4c4" stroke-width="1" />
<path d="M259.2 52.8l1.3-1.3v4.6" fill="none" stroke="#000" stroke-width="1.2" />
</svg>
</body></html>
